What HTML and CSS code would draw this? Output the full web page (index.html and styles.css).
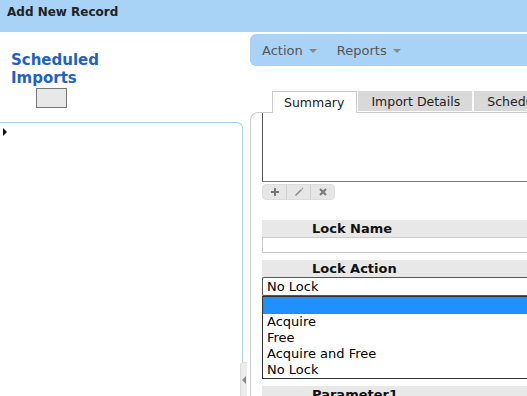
FILE: index.html
```html
<!DOCTYPE html>
<html>
<head>
	<link rel="stylesheet" href="styles.css">
</head>
<body>
	<div class="top-bar">Add New Record</div>
	<div class="main">
		<div class="side">
			<div class="side-title">Scheduled<br>Imports</div>
			<div class="side-icon"></div>
			<div class="side-box">
				<span class="tree-arrow"></span>
			</div>
			<div class="collapse-handle"><span class="handle-arrow"></span></div>
		</div>
		<div class="content">
			<div class="toolbar">
				<span class="menu">Action <span class="caret"></span></span>
				<span class="menu">Reports <span class="caret"></span></span>
			</div>
			<div class="tabs">
				<div class="tab active">Summary</div>
				<div class="tab">Import Details</div>
				<div class="tab">Schedule</div>
			</div>
			<div class="panel">
				<div class="grid-box"></div>
				<div class="grid-buttons">
					<span class="gbtn">
						<svg width="10" height="10" viewBox="0 0 10 10"><path d="M5 1v8M1 5h8" stroke="#777" stroke-width="2"/></svg>
					</span>
					<span class="gbtn">
						<svg width="10" height="10" viewBox="0 0 10 10"><path d="M1.5 8.5L7.5 2.5" stroke="#888" stroke-width="1.5"/><path d="M8 1l1 1" stroke="#999" stroke-width="1.2"/></svg>
					</span>
					<span class="gbtn">
						<svg width="10" height="10" viewBox="0 0 10 10"><path d="M2 2l6 6M8 2l-6 6" stroke="#777" stroke-width="2"/></svg>
					</span>
				</div>

				<div class="field-label first">Lock Name</div>
				<div class="field-input"></div>

				<div class="field-label">Lock Action</div>
				<div class="select-wrap">
					<div class="field-select">No Lock</div>
					<div class="dropdown">
						<div class="opt selected">&nbsp;</div>
						<div class="opt">Acquire</div>
						<div class="opt">Free</div>
						<div class="opt">Acquire and Free</div>
						<div class="opt">No Lock</div>
					</div>
				</div>

				<div class="field-label later">Parameter1</div>
			</div>
		</div>
	</div>
</body>
</html>
```

FILE: styles.css
```css
html, body {
	margin: 0;
	padding: 0;
	width: 100%;
	height: 100%;
	overflow: hidden;
}
body {
	font-family: "DejaVu Sans", Verdana, sans-serif;
	font-size: 12px;
	color: #000;
	background: #fff;
}

.top-bar {
	height: 32px;
	line-height: 24px;
	padding-left: 7px;
	background-color: #a8d2f6;
	font-weight: bold;
	font-size: 12px;
	color: #222;
	box-sizing: border-box;
}

.main {
	display: flex;
	height: calc(100% - 32px);
}

/* left column */
.side {
	position: relative;
	width: 243px;
	flex-shrink: 0;
}
.side-title {
	padding: 19px 0 0 11px;
	font-weight: bold;
	font-size: 15px;
	line-height: 18px;
	color: #1f62c4;
}
.side-icon {
	width: 29px;
	height: 18px;
	margin: 1px 0 0 36px;
	background-color: #e8e8e8;
	border: 1px solid #777;
}
.side-box {
	margin-top: 14px;
	height: 300px;
	border-top: 1px solid #a8d2f6;
	border-right: 1px solid #a8d2f6;
	border-top-right-radius: 6px;
	position: relative;
}
.tree-arrow {
	position: absolute;
	left: 3px;
	top: 5px;
	width: 0;
	height: 0;
	border-top: 4px solid transparent;
	border-bottom: 4px solid transparent;
	border-left: 4px solid #111;
}
.collapse-handle {
	position: absolute;
	right: -4px;
	top: 330px;
	width: 6px;
	height: 40px;
	background-color: #ececec;
	border-radius: 4px 0 0 0;
	border-left: 1px solid #ddd;
	border-top: 1px solid #ddd;
}
.handle-arrow {
	position: absolute;
	left: 1px;
	top: 13px;
	width: 0;
	height: 0;
	border-top: 4px solid transparent;
	border-bottom: 4px solid transparent;
	border-right: 4px solid #888;
}

/* right column */
.content {
	flex: 1;
	margin-left: 7px;
	min-width: 0;
	overflow: hidden;
}
.toolbar {
	margin-top: 2px;
	height: 32px;
	display: flex;
	align-items: center;
	gap: 20px;
	padding-left: 12px;
	background-color: #a8d2f6;
	border-radius: 6px 0 0 6px;
	font-size: 13px;
	color: #555;
}
.caret {
	display: inline-block;
	vertical-align: middle;
	width: 0;
	height: 0;
	margin-left: 2px;
	border-left: 4px solid transparent;
	border-right: 4px solid transparent;
	border-top: 4px solid #888;
}

.tabs {
	display: flex;
	margin: 25px 0 0 22px;
	gap: 2px;
	white-space: nowrap;
}
.tab {
	height: 20px;
	line-height: 21px;
	padding: 0 12px 0 13px;
	background-color: #d9d9d9;
	font-size: 12.5px;
	color: #222;
	box-sizing: border-box;
}
.tab.active {
	background-color: #fff;
	border: 1px solid #ccc;
	border-bottom: none;
	height: 22px;
	padding: 0 12px 0 11px;
	margin-right: -1px;
	position: relative;
	z-index: 1;
}

.panel {
	margin-top: -1px;
	padding-left: 11px;
	border-left: 1px solid #ccc;
	border-top: 1px solid #ccc;
	border-top-left-radius: 8px;
	height: 300px;
}
.grid-box {
	height: 68px;
	border-left: 1px solid #555;
	border-bottom: 1px solid #777;
}
.grid-buttons {
	display: flex;
	width: fit-content;
	margin-top: 2px;
	background-color: #e6e6e6;
	border: 1px solid #ddd;
	border-radius: 4px;
}
.gbtn {
	width: 23px;
	height: 14px;
	display: flex;
	align-items: center;
	justify-content: center;
	border-left: 1px solid #d0d0d0;
}
.gbtn:first-child {
	border-left: none;
}

.field-label {
	margin-top: 7px;
	height: 17px;
	line-height: 17px;
	padding-left: 50px;
	background-color: #e8e8e8;
	font-weight: bold;
	font-size: 13px;
	color: #111;
}
.field-label.first {
	margin-top: 20px;
}
.field-label.later {
	margin-top: 90px;
}
.field-input {
	height: 14px;
	border: 1px solid #ccc;
	border-right: none;
}
.select-wrap {
	position: relative;
}
.field-select {
	height: 19px;
	line-height: 18px;
	padding-left: 4px;
	border: 1px solid #555;
	border-right: none;
	border-radius: 2px 0 0 2px;
	font-size: 13px;
	box-sizing: border-box;
}
.dropdown {
	position: absolute;
	left: 0;
	right: 0;
	top: 19px;
	background: #fff;
	border: 1px solid #333;
	border-right: none;
	z-index: 5;
}
.opt {
	height: 16px;
	line-height: 16px;
	padding-left: 4px;
	font-size: 13px;
}
.opt.selected {
	background-color: #1e90ff;
	height: 17px;
}
```
